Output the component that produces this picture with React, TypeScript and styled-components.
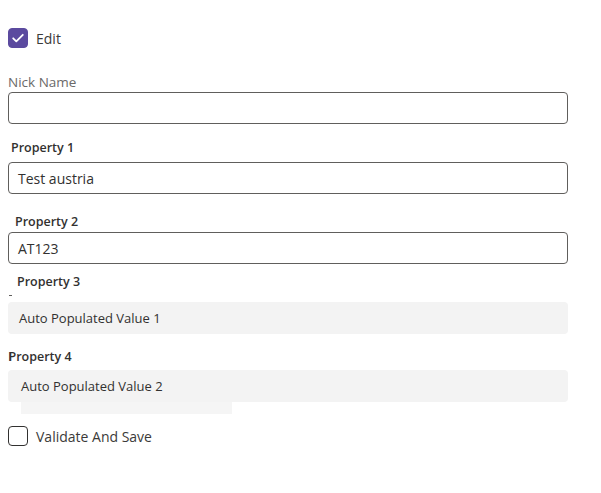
import React from 'react';
import styled, { createGlobalStyle } from 'styled-components';

const GlobalStyle = createGlobalStyle`
  body {
    margin: 0;
    background: #ffffff;
    font-family: 'Open Sans', 'Noto Sans', sans-serif;
    color: #323130;
  }
`;

type Field = {
  label: string;
  value: string;
  readOnly?: boolean;
  muted?: boolean;
  labelIndent: number;
  valueIndent: number;
  labelGap: number;
  boxGap: number;
};

const fields: Field[] = [
  { label: 'Nick Name', value: '', muted: true, labelIndent: 0, valueIndent: 9, labelGap: 25, boxGap: 1 },
  { label: 'Property 1', value: 'Test austria', labelIndent: 3, valueIndent: 9, labelGap: 15, boxGap: 5 },
  { label: 'Property 2', value: 'AT123', labelIndent: 7, valueIndent: 9, labelGap: 19, boxGap: 1 },
  { label: 'Property 3', value: 'Auto Populated Value 1', readOnly: true, labelIndent: 9, valueIndent: 11, labelGap: 9, boxGap: 6 },
  { label: 'Property 4', value: 'Auto Populated Value 2', readOnly: true, labelIndent: 0, valueIndent: 13, labelGap: 14, boxGap: 4 },
];

const CheckIcon = () => (
  <svg width="14" height="14" viewBox="0 0 14 14" fill="none">
    <path d="M2.2 7.3l3.1 3.1 6.5-6.6" stroke="#ffffff" strokeWidth="1.8" strokeLinecap="round" strokeLinejoin="round" />
  </svg>
);

const App: React.FC = () => {
  return (
    <Page>
      <GlobalStyle />
      <CheckRow>
        <Box checked>
          <CheckIcon />
        </Box>
        <CheckText>Edit</CheckText>
      </CheckRow>

      {fields.map((field) => (
        <FieldBlock key={field.label} gap={field.labelGap}>
          <Label muted={field.muted} indent={field.labelIndent}>
            {field.label === 'Property 4' && <Stray>I</Stray>}
            {field.label}
          </Label>
          {field.label === 'Property 3' && <Tick />}
          {field.readOnly ? (
            <ReadOnlyBox gap={field.boxGap} indent={field.valueIndent}>
              {field.value}
            </ReadOnlyBox>
          ) : (
            <TextBox gap={field.boxGap} indent={field.valueIndent}>
              {field.value}
            </TextBox>
          )}
          {field.label === 'Property 4' && <Shadow />}
        </FieldBlock>
      ))}

      <CheckRow gap={12}>
        <Box />
        <CheckText>Validate And Save</CheckText>
      </CheckRow>
    </Page>
  );
};
export default App;

const Page = styled.div`
  display: flex;
  flex-direction: column;
  width: 560px;
  padding: 28px 0 0 8px;
`;

const CheckRow = styled.div<{ gap?: number }>`
  display: flex;
  align-items: center;
  gap: 8px;
  height: 20px;
  margin-top: ${(props) => props.gap ?? 0}px;
`;

const Box = styled.div<{ checked?: boolean }>`
  box-sizing: border-box;
  width: 20px;
  height: 20px;
  border-radius: 4px;
  display: flex;
  align-items: center;
  justify-content: center;
  background: ${(props) => (props.checked ? '#5b4a9f' : '#ffffff')};
  border: 1px solid ${(props) => (props.checked ? '#5b4a9f' : '#323130')};
`;

const CheckText = styled.span`
  font-size: 14px;
  color: #3b3a39;
`;

const FieldBlock = styled.div<{ gap: number }>`
  display: flex;
  flex-direction: column;
  margin-top: ${(props) => props.gap}px;
`;

const Label = styled.div<{ muted?: boolean; indent: number }>`
  font-size: ${(props) => (props.muted ? 13.5 : 12.5)}px;
  line-height: 18px;
  padding-left: ${(props) => props.indent}px;
  color: ${(props) => (props.muted ? '#6b6a69' : '#323130')};
  font-weight: ${(props) => (props.muted ? 400 : 600)};
  white-space: nowrap;
`;

const Stray = styled.span`
  display: inline-block;
  margin-right: -3px;
  font-weight: 400;
`;

const Tick = styled.div`
  width: 3px;
  height: 1px;
  margin: 4px 0 0 1px;
  background: #605e5c;
`;

const TextBox = styled.div<{ gap: number; indent: number }>`
  box-sizing: border-box;
  height: 32px;
  margin-top: ${(props) => props.gap}px;
  padding-left: ${(props) => props.indent}px;
  display: flex;
  align-items: center;
  border: 1px solid #605e5c;
  border-radius: 4px;
  font-size: 14px;
  color: #323130;
`;

const ReadOnlyBox = styled.div<{ gap: number; indent: number }>`
  box-sizing: border-box;
  height: 32px;
  margin-top: ${(props) => props.gap}px;
  padding-left: ${(props) => props.indent}px;
  display: flex;
  align-items: center;
  background: #f3f3f3;
  border-radius: 4px;
  font-size: 13px;
  color: #323130;
`;

const Shadow = styled.div`
  width: 211px;
  height: 12px;
  margin-left: 13px;
  background: #f5f5f5;
`;
